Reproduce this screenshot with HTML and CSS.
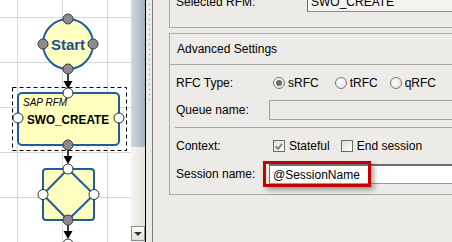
FILE: index.html
```html
<!DOCTYPE html>
<html lang="en">
<head>
    <meta charset="UTF-8">
    <title>RFM Step Properties</title>
    <link rel="stylesheet" href="styles.css">
</head>
<body>
    <div class="app">
        <div class="canvas">
            <svg width="131" height="242" viewBox="0 0 131 242">
                <g class="grid">
                    <line x1="17.5" y1="0" x2="17.5" y2="242"/>
                    <line x1="62.5" y1="0" x2="62.5" y2="242"/>
                    <line x1="107.5" y1="0" x2="107.5" y2="242"/>
                    <line x1="0" y1="17.5" x2="131" y2="17.5"/>
                    <line x1="0" y1="62.5" x2="131" y2="62.5"/>
                    <line x1="0" y1="107.5" x2="131" y2="107.5"/>
                    <line x1="0" y1="152.5" x2="131" y2="152.5"/>
                    <line x1="0" y1="197.5" x2="131" y2="197.5"/>
                </g>

                <!-- start node -->
                <circle class="node" cx="68" cy="44" r="25"/>
                <text class="start-label" x="68" y="49.5" text-anchor="middle">Start</text>

                <!-- connectors -->
                <line class="edge" x1="68" y1="70" x2="68" y2="82"/>
                <polygon class="head" points="63.5,81 72.5,81 68,89"/>
                <line class="edge" x1="68" y1="150" x2="68" y2="157"/>
                <polygon class="head" points="63.5,156 72.5,156 68,164"/>
                <line class="edge" x1="68" y1="225" x2="68" y2="232"/>
                <polygon class="head" points="63.5,231 72.5,231 68,239"/>

                <!-- rfm node (selected) -->
                <rect class="select" x="12.5" y="87.5" width="114" height="63"/>
                <rect class="node" x="18" y="93" width="101" height="52" rx="4"/>
                <text class="rfm-kind" x="23" y="106">SAP RFM</text>
                <text class="rfm-name" x="27" y="124" textLength="82" lengthAdjust="spacingAndGlyphs">SWO_CREATE</text>

                <!-- decision node -->
                <rect class="node" x="43" y="169" width="51" height="51" rx="3"/>
                <polygon class="node-line" points="68,169 94,194.5 68,220 43,194.5"/>

                <!-- handles -->
                <circle class="pin" cx="68" cy="19" r="5"/>
                <circle class="pin" cx="43" cy="44" r="5"/>
                <circle class="pin" cx="93" cy="44" r="5"/>
                <circle class="pin" cx="68" cy="69" r="5"/>
                <circle class="pin-free" cx="68" cy="93" r="5"/>
                <circle class="pin-free" cx="18" cy="118" r="5"/>
                <circle class="pin-free" cx="119" cy="118" r="5"/>
                <circle class="pin" cx="68" cy="145" r="5"/>
                <circle class="pin-free" cx="68" cy="169" r="5"/>
                <circle class="pin-free" cx="43" cy="194.5" r="5"/>
                <circle class="pin-free" cx="94" cy="194.5" r="5"/>
                <circle class="pin" cx="68" cy="220" r="5"/>
                <circle class="pin-free" cx="68" cy="244" r="5"/>
            </svg>
        </div>

        <div class="vscroll">
            <div class="thumb"></div>
            <div class="track"></div>
            <div class="btn-down"><span class="arrow"></span></div>
        </div>

        <div class="splitter"><div class="grip"></div></div>

        <div class="panel">
            <div class="group group-rfm">
                <div class="row">
                    <span class="label label-rfm">Selected RFM:</span>
                    <div class="field field-ro">SWO_CREATE</div>
                </div>
            </div>

            <div class="group group-adv">
                <div class="group-head">Advanced Settings</div>
                <div class="group-body">
                    <div class="row">
                        <span class="label">RFC Type:</span>
                        <label class="opt opt-s"><span class="radio checked"></span>sRFC</label>
                        <label class="opt opt-t"><span class="radio"></span>tRFC</label>
                        <label class="opt"><span class="radio"></span>qRFC</label>
                    </div>
                    <div class="row row-gap">
                        <span class="label">Queue name:</span>
                        <div class="field field-off"></div>
                    </div>
                    <div class="sep"></div>
                    <div class="row row-ctx">
                        <span class="label">Context:</span>
                        <label class="opt opt-stateful">
                            <span class="check checked">
                                <svg width="11" height="11" viewBox="0 0 11 11"><path d="M2 5.5 L4.5 8 L9 2.5" fill="none" stroke="#7a7a7a" stroke-width="2"/></svg>
                            </span>Stateful
                        </label>
                        <label class="opt"><span class="check"></span>End session</label>
                    </div>
                    <div class="row row-session">
                        <span class="label">Session name:</span>
                        <div class="field field-edit">@SessionName</div>
                        <div class="highlight"></div>
                    </div>
                </div>
            </div>
        </div>
    </div>
</body>
</html>
```

FILE: styles.css
```css
body {
    margin: 0;
    padding: 0;
    overflow: hidden;
    background-color: #ecebe7;
    font-family: "Liberation Sans", Arial, sans-serif;
    font-size: 12px;
    color: #000;
}
.app {
    display: flex;
    height: 242px;
}

/* diagram canvas */
.canvas {
    width: 131px;
    flex: none;
    background-color: #fff;
    overflow: hidden;
}
.canvas svg {
    display: block;
}
.grid line {
    stroke: #d8d8d8;
    stroke-width: 1;
}
.node {
    fill: #ffffc0;
    stroke: #1e5ca6;
    stroke-width: 2;
}
.node-line {
    fill: none;
    stroke: #1e5ca6;
    stroke-width: 2;
}
.select {
    fill: none;
    stroke: #000;
    stroke-width: 1;
    stroke-dasharray: 4 3;
}
.edge {
    stroke: #000;
    stroke-width: 1.5;
}
.head {
    fill: #000;
}
.pin {
    fill: #8c8c8c;
    stroke: #3c3c3c;
    stroke-width: 1;
}
.pin-free {
    fill: #fff;
    stroke: #2c2c2c;
    stroke-width: 1;
}
.start-label {
    font-family: "Liberation Sans", Arial, sans-serif;
    font-weight: bold;
    font-size: 15px;
    fill: #1c4f99;
}
.rfm-kind {
    font-family: "Liberation Sans", Arial, sans-serif;
    font-style: italic;
    font-size: 10px;
    fill: #000;
}
.rfm-name {
    font-family: "Liberation Sans", Arial, sans-serif;
    font-weight: bold;
    font-size: 13px;
    fill: #000;
}

/* vertical scrollbar */
.vscroll {
    width: 14px;
    flex: none;
    display: flex;
    flex-direction: column;
    background: linear-gradient(to right, #f4f3ef, #e6e4dc);
}
.thumb {
    height: 147px;
    background: linear-gradient(to right, #cdd8df, #b4c3cc 60%, #a2b1bb);
    border-bottom-left-radius: 2px;
    border-bottom-right-radius: 2px;
}
.track {
    flex: 1;
}
.btn-down {
    height: 13px;
    margin: 0 0 1px 0;
    border: 1px solid #8d8d8d;
    background: linear-gradient(#fbfbf9, #e2e0d8);
    display: flex;
    align-items: center;
    justify-content: center;
}
.arrow {
    width: 0;
    height: 0;
    border-left: 4px solid transparent;
    border-right: 4px solid transparent;
    border-top: 4px solid #333;
}

/* splitter between diagram and properties */
.splitter {
    width: 6px;
    flex: none;
    border-left: 1px solid #000;
    border-right: 1px solid #7e7e7e;
    background-color: #ecebe7;
}
.grip {
    height: 100px;
    margin-top: 2px;
    background-image: radial-gradient(circle, #8a8a8a 0.8px, transparent 1px);
    background-size: 5px 5px;
    background-position: 1px 0;
}

/* properties panel */
.panel {
    flex: 1;
    overflow: hidden;
    padding-left: 16px;
}
.group {
    width: 420px;
    border: 1px solid #a9a9a9;
    box-sizing: border-box;
}
.group-rfm {
    margin-top: -22px;
    height: 50px;
    padding: 13px 0 0 6px;
}
.group-adv {
    margin-top: 5px;
}
.group-head {
    height: 30px;
    line-height: 30px;
    padding-left: 7px;
    border-bottom: 1px solid #a9a9a9;
}
.group-body {
    padding: 8px 0 10px 6px;
}
.row {
    display: flex;
    align-items: center;
    height: 20px;
    position: relative;
}
.row-gap {
    margin-top: 7px;
}
.row-ctx {
    margin-top: 8px;
}
.row-session {
    margin-top: 8px;
}
.label {
    width: 93px;
    flex: none;
}
.label-rfm {
    width: 131px;
}
.sep {
    height: 1px;
    margin: 7px 0 0 -1px;
    background-color: #a9a9a9;
}
.field {
    flex: 1;
    height: 20px;
    box-sizing: border-box;
    padding-left: 3px;
    line-height: 18px;
    border: 1px solid #a0a0a0;
}
.field-ro {
    background-color: #f4f3ef;
    border-color: #6c6c6c #d8d8d8 #8a8a8a #6c6c6c;
}
.field-off {
    background-color: #ecebe7;
    border-color: #a0a0a0 #d0d0d0 #a0a0a0 #a0a0a0;
}
.field-edit {
    background-color: #fff;
    border-color: #6c6c6c #e0e0e0 #9a9a9a #6c6c6c;
    border-width: 2px 1px 1px 1px;
}

/* radio buttons and checkboxes */
.opt {
    display: flex;
    align-items: center;
    margin-left: 4px;
}
.opt-s {
    margin-right: 12px;
}
.opt-t {
    margin-right: 8px;
}
.opt-stateful {
    margin-right: 7px;
}
.radio {
    width: 12px;
    height: 12px;
    box-sizing: border-box;
    border: 1px solid #7d7d7d;
    border-radius: 50%;
    background: radial-gradient(circle at 40% 40%, #ffffff, #dcdbd6);
    margin-right: 3px;
    position: relative;
}
.radio.checked::after {
    content: "";
    position: absolute;
    left: 2px;
    top: 2px;
    width: 6px;
    height: 6px;
    border-radius: 50%;
    background-color: #6b6b6b;
}
.check {
    width: 12px;
    height: 12px;
    box-sizing: border-box;
    border: 1px solid #6a6a6a;
    background: linear-gradient(135deg, #dedcd6, #ffffff);
    margin-right: 4px;
    display: flex;
    align-items: center;
    justify-content: center;
}
.check svg {
    display: block;
}

/* annotation frame around the session field */
.highlight {
    position: absolute;
    left: 87px;
    top: -3px;
    width: 108px;
    height: 26px;
    box-sizing: border-box;
    border: 3px solid #c40000;
    box-shadow: 3px 3px 5px rgba(0, 0, 0, 0.35);
}
```
